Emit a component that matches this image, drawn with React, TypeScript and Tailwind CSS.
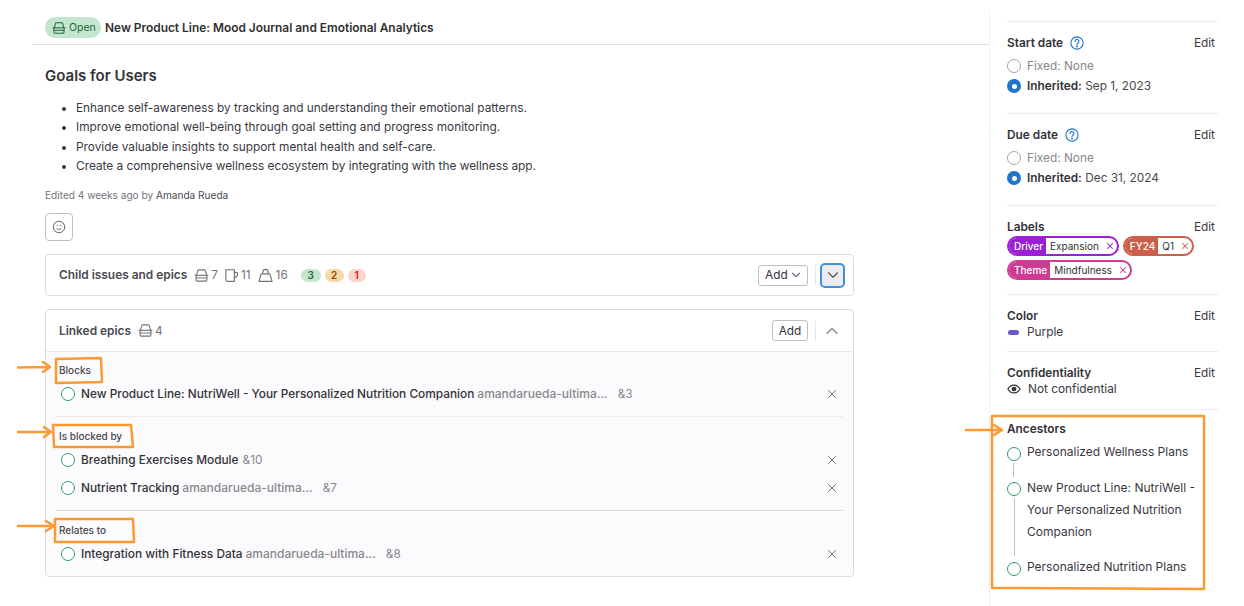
import { ChevronDown, ChevronUp, X } from 'lucide-react';

function EpicIcon({ className = '' }: { className?: string }) {
  return (
    <svg viewBox="0 0 16 16" fill="none" stroke="currentColor" strokeWidth="1.2" className={className}>
      <path d="M2.600 7.600 4 2.800c.1-.5.5-.8 1-.8h6c.5 0 .9.3 1 .8l1.400 4.800" />
      <path d="M.7 7.800h14.600" />
      <path d="M1.800 10.600h12.400M2.200 7.800v4.900c0 .8.6 1.300 1.300 1.300h9c.7 0 1.300-.5 1.300-1.300V7.800" />
    </svg>
  );
}

function IssueIcon({ className = '' }: { className?: string }) {
  return (
    <svg viewBox="0 0 16 16" fill="none" stroke="currentColor" strokeWidth="1.2" className={className}>
      <path d="M2 1.800h9v12.400H3.300c-.8 0-1.300-.5-1.300-1.300V1.800Z" />
      <path d="M11 4.600h1.800c.9 0 1.700.7 1.700 1.600v.9c0 .5-.2 1-.7 1.400L11 11" />
    </svg>
  );
}

function WeightIcon({ className = '' }: { className?: string }) {
  return (
    <svg viewBox="0 0 16 16" fill="none" stroke="currentColor" strokeWidth="1.2" className={className}>
      <path d="M3.400 6.200h9.200l2.400 8H1l2.400-8Z" strokeLinejoin="round" />
      <path d="M5.200 6.200V4.200a2.800 2.800 0 0 1 5.600 0v2" />
    </svg>
  );
}

function StatusCircle({ className = '' }: { className?: string }) {
  return <span className={`block w-[14px] h-[14px] shrink-0 rounded-full border-[1.75px] border-[#2f9a63] bg-white ${className}`} />;
}

function HelpIcon() {
  return (
    <svg viewBox="0 0 16 16" fill="none" stroke="#1f75cb" strokeWidth="1.3" className="w-[14px] h-[14px]">
      <circle cx="8" cy="8" r="7" />
      <path d="M5.800 6.200a2.200 2.200 0 1 1 3.500 1.800c-.8.500-1.300 1-1.300 1.800" strokeLinecap="round" />
      <circle cx="8" cy="12" r=".5" fill="#1f75cb" />
    </svg>
  );
}

function EyeIcon() {
  return (
    <svg viewBox="0 0 16 16" fill="none" stroke="#333238" strokeWidth="1.4" className="w-[14px] h-[14px]">
      <path d="M1 8c1.600-3 4-4.500 7-4.500S13.400 5 15 8c-1.600 3-4 4.500-7 4.500S2.600 11 1 8Z" />
      <circle cx="8" cy="8" r="2" fill="#333238" />
    </svg>
  );
}

function Radio({ checked }: { checked?: boolean }) {
  return checked ? (
    <span className="w-[14px] h-[14px] rounded-full bg-[#1f75cb] flex items-center justify-center shrink-0">
      <span className="w-[5px] h-[5px] rounded-full bg-white" />
    </span>
  ) : (
    <span className="w-[14px] h-[14px] rounded-full border border-[#a4a3a8] bg-white shrink-0" />
  );
}

function DateBlock({ title, date }: { title: string; date: string }) {
  return (
    <div className="h-[92px] border-b border-[#ececef] pt-[11px]">
      <div className="flex items-center justify-between h-[20px] pr-[3px]">
        <div className="flex items-center gap-[7px]">
          <span className="font-semibold text-[#333238]">{title}</span>
          <HelpIcon />
        </div>
        <span className="text-[#3a383f]">Edit</span>
      </div>
      <div className="flex items-center gap-[6px] h-[20px] mt-[3px] text-[#89888d]">
        <Radio />
        <span>Fixed: None</span>
      </div>
      <div className="flex items-center gap-[6px] h-[20px] text-[#4a4950]">
        <Radio checked />
        <span>
          <span className="font-semibold text-[#333238]">Inherited:</span> {date}
        </span>
      </div>
    </div>
  );
}

interface ScopedLabelProps {
  scope: string;
  value: string;
  border: string;
  fill: string;
  iconColor: string;
}

function ScopedLabel({ scope, value, border, fill, iconColor }: ScopedLabelProps) {
  return (
    <span className={`inline-flex items-center h-[20px] rounded-full border-2 text-[10px] leading-none overflow-hidden ${border}`}>
      <span className={`h-full flex items-center pl-[5px] pr-[3px] text-white font-medium ${fill}`}>{scope}</span>
      <span className="flex items-center pl-[4px] pr-[2px] text-[#333238] gap-[6px]">
        {value}
        <X size={10} strokeWidth={2.500} className={iconColor} />
      </span>
    </span>
  );
}

function LinkedRow({ title, path, iid, className = '' }: { title: string; path?: string; iid: string; className?: string }) {
  return (
    <div className={`flex items-center h-[28px] pl-[15px] pr-[14px] whitespace-nowrap ${className}`}>
      <StatusCircle />
      <span className="ml-[6px] text-[11.850px] font-medium text-[#333238]">{title}</span>
      {path && <span className="ml-[3px] text-[12px] font-medium text-[#89888d]">{path}</span>}
      <span className={`${path ? 'ml-[10px]' : 'ml-[4px]'} text-[#89888d]`}>{iid}</span>
      <X size={14} strokeWidth={1.500} className="ml-auto text-[#626168]" />
    </div>
  );
}

export default function App() {
  return (
    <div className="relative flex w-[1244px] h-[606px] overflow-hidden bg-white text-[11.830px] leading-[18px] text-[#333238] font-['Inter',sans-serif]">
      <main className="w-[989px] shrink-0 pt-[17px]">
        <div className="ml-[32px] h-[28px] pl-[13px] border-b border-[#e1e1e3]">
          <div className="flex items-center h-[21px]">
            <span className="flex items-center gap-[3px] h-[21px] w-[56px] pl-[7px] rounded-full bg-[#c3e6cd] text-[#24663b] text-[10.500px]">
              <EpicIcon className="w-[14px] h-[14px]" />
              Open
            </span>
            <span className="ml-[4px] mt-[1px] text-[11.900px] font-semibold text-[#303030]">New Product Line: Mood Journal and Emotional Analytics</span>
          </div>
        </div>

        <div className="pl-[45px] w-[854px]">
          <h2 className="mt-[21px] text-[15px] leading-[20px] font-semibold text-[#333238]">Goals for Users</h2>
          <ul className="mt-[13px] ml-[31px] list-disc leading-[19.300px] text-[#3a383f]">
            <li>Enhance self-awareness by tracking and understanding their emotional patterns.</li>
            <li>Improve emotional well-being through goal setting and progress monitoring.</li>
            <li>Provide valuable insights to support mental health and self-care.</li>
            <li>Create a comprehensive wellness ecosystem by integrating with the wellness app.</li>
          </ul>
          <p className="mt-[11px] text-[10.100px] leading-[16px] text-[#737278]">
            Edited 4 weeks ago by <span className="text-[#4a4950]">Amanda Rueda</span>
          </p>
          <button className="mt-[10px] flex items-center justify-center w-[28px] h-[28px] rounded-[4px] border border-[#bfbfc3] bg-white">
            <svg viewBox="0 0 16 16" fill="none" stroke="#626168" strokeWidth="1.100" className="w-[14px] h-[14px]">
              <circle cx="8" cy="8" r="6.500" />
              <path d="M5.500 9.500c.6 1 1.500 1.500 2.500 1.500s1.900-.5 2.500-1.500" strokeLinecap="round" />
              <path d="M6 6v.6M10 6v.6" strokeLinecap="round" />
            </svg>
          </button>

          <section className="mt-[13px] flex items-center h-[42px] pl-[13px] pr-[8px] rounded-[4px] border border-[#dcdcde]">
            <span className="text-[11.900px] font-semibold text-[#4a4950]">Child issues and epics</span>
            <span className="ml-[7px] flex items-center text-[#737278]">
              <EpicIcon className="w-[15px] h-[15px]" />
              <span className="ml-[2px]">7</span>
              <IssueIcon className="ml-[6px] w-[15px] h-[15px]" />
              <span className="ml-[2px]">11</span>
              <WeightIcon className="ml-[7px] w-[15px] h-[15px]" />
              <span className="ml-[3px]">16</span>
            </span>
            <span className="ml-[13px] flex items-center gap-[4px] text-[10px] font-semibold">
              <span className="flex justify-center w-[20px] h-[13px] leading-[13px] rounded-full bg-[#c3e6cd] text-[#24663b]">3</span>
              <span className="flex justify-center w-[19px] h-[13px] leading-[13px] rounded-full bg-[#f5d9a8] text-[#8f4700]">2</span>
              <span className="flex justify-center w-[18px] h-[13px] leading-[13px] rounded-full bg-[#fdd4cd] text-[#c91c00]">1</span>
            </span>
            <div className="ml-auto flex items-center">
              <button className="flex items-center justify-between w-[50px] h-[21px] pl-[6px] pr-[4px] rounded-[3px] border border-[#bfbfc3] text-[#333238]">
                Add <ChevronDown size={14} className="text-[#737278]" />
              </button>
              <span className="ml-[7px] w-px h-[20px] bg-[#e7e7e9]" />
              <button className="ml-[4px] flex items-center justify-center w-[25px] h-[25px] rounded-[5px] border-2 border-[#428fdc] bg-[#ececef]">
                <ChevronDown size={18} strokeWidth={1.500} className="text-[#535158]" />
              </button>
            </div>
          </section>

          <section className="mt-[13px] rounded-[4px] border border-[#dcdcde]">
            <div className="flex items-center h-[42px] pl-[13px] pr-[11px] border-b border-[#e7e7e9]">
              <span className="text-[11.900px] font-semibold text-[#4a4950]">Linked epics</span>
              <span className="ml-[7px] flex items-center gap-[2px] text-[#737278]">
                <EpicIcon className="w-[15px] h-[15px]" />4
              </span>
              <div className="ml-auto flex items-center">
                <button className="flex items-center justify-center w-[36px] h-[21px] rounded-[3px] border border-[#bfbfc3] text-[#333238]">Add</button>
                <span className="ml-[7px] w-px h-[20px] bg-[#e7e7e9]" />
                <ChevronUp size={20} strokeWidth={1.500} className="ml-[6px] text-[#89888d]" />
              </div>
            </div>
            <div className="h-[224px] bg-[#fbfafd] rounded-b-[4px]">
              <div className="mx-[10px] h-[65px] border-b border-[#ececef] pt-[10px]">
                <div className="pl-[3px] h-[16px] text-[10px] leading-[16px] font-medium text-[#4a4950]">Blocks</div>
                <LinkedRow className="-mx-[10px] mt-[2px]" title="New Product Line: NutriWell - Your Personalized Nutrition Companion" path="amandarueda-ultima..." iid="&3" />
              </div>
              <div className="mx-[10px] h-[94px] border-b border-[#dcdcde] pt-[11px]">
                <div className="pl-[3px] h-[16px] text-[10px] leading-[16px] font-medium text-[#4a4950]">Is blocked by</div>
                <LinkedRow className="-mx-[10px] mt-[2px]" title="Breathing Exercises Module" iid="&10" />
                <LinkedRow className="-mx-[10px]" title="Nutrient Tracking" path="amandarueda-ultima..." iid="&7" />
              </div>
              <div className="mx-[10px] pt-[11px]">
                <div className="pl-[3px] h-[16px] text-[10px] leading-[16px] font-medium text-[#4a4950]">Relates to</div>
                <LinkedRow className="-mx-[10px] mt-[2px]" title="Integration with Fitness Data" path="amandarueda-ultima..." iid="&8" />
              </div>
            </div>
          </section>
        </div>
      </main>

      <aside className="mt-[12px] w-[255px] border-l border-[#f0f0f2] pl-[17px] pr-[26px] text-[#3a383f]">
        <div className="mt-[9px] border-t border-[#ececef]">
          <DateBlock title="Start date" date="Sep 1, 2023" />
          <DateBlock title="Due date" date="Dec 31, 2024" />

          <div className="h-[89px] border-b border-[#ececef] pt-[11px]">
            <div className="flex items-center justify-between h-[19px] pr-[3px]">
              <span className="font-semibold text-[#333238]">Labels</span>
              <span>Edit</span>
            </div>
            <div className="flex flex-wrap gap-x-[4px] gap-y-[4px]">
              <ScopedLabel scope="Driver" value="Expansion" border="border-[#9a1fd6]" fill="bg-[#9a1fd6]" iconColor="text-[#9a1fd6]" />
              <ScopedLabel scope="FY24" value="Q1" border="border-[#cc5f4a]" fill="bg-[#cc5f4a]" iconColor="text-[#cc5f4a]" />
              <ScopedLabel scope="Theme" value="Mindfulness" border="border-[#cf3a92]" fill="bg-[#cf3a92]" iconColor="text-[#cf3a92]" />
            </div>
          </div>

          <div className="h-[57px] border-b border-[#ececef] pt-[11px]">
            <div className="flex items-center justify-between h-[20px] pr-[3px]">
              <span className="font-semibold text-[#333238]">Color</span>
              <span>Edit</span>
            </div>
            <div className="flex items-center gap-[8px] h-[12px]">
              <span className="ml-[1px] w-[11px] h-[5px] rounded-full bg-[#6d57c7]" />
              <span>Purple</span>
            </div>
          </div>

          <div className="h-[58px] border-b border-[#ececef] pt-[11px]">
            <div className="flex items-center justify-between h-[20px] pr-[3px]">
              <span className="font-semibold text-[#333238]">Confidentiality</span>
              <span>Edit</span>
            </div>
            <div className="flex items-center gap-[7px] h-[12px]">
              <EyeIcon />
              <span>Not confidential</span>
            </div>
          </div>

          <div className="pt-[10px] text-[12px]">
            <div className="text-[11.830px] font-semibold text-[#333238] h-[18px]">Ancestors</div>
            <div className="mt-[4px] flex">
              <StatusCircle className="mt-[5px]" />
              <span className="ml-[6px] leading-[20px]">Personalized Wellness Plans</span>
            </div>
            <div className="ml-[6px] mt-[1px] w-px h-[14px] bg-[#bfbfc3]" />
            <div className="flex">
              <div className="shrink-0 w-[14px] flex flex-col items-center">
                <StatusCircle className="mt-[5px]" />
                <span className="w-px h-[58px] mt-[2px] bg-[#bfbfc3]" />
              </div>
              <span className="ml-[6px] w-[172px] leading-[22px]">New Product Line: NutriWell - Your Personalized Nutrition Companion</span>
            </div>
            <div className="mt-[1px] flex">
              <StatusCircle className="mt-[5px]" />
              <span className="ml-[6px] leading-[20px]">Personalized Nutrition Plans</span>
            </div>
          </div>
        </div>
      </aside>

      {/* hand drawn annotations on top of the screenshot */}
      <svg className="absolute inset-0 pointer-events-none" width="1244" height="606" fill="none" stroke="#fb9a32" strokeWidth="2.500" strokeLinecap="round" strokeLinejoin="round">
        <path d="M18 367.500 48 367M43 362l7 5-7 5" />
        <path d="M56 359 101 358 102 382 56 383Z" />
        <path d="M18 432 49 432M44 427l7 5-7 5" />
        <path d="M53 425 131 425 133 447 54 447Z" />
        <path d="M18 526 51 526M46 521l8 5-8 5" />
        <path d="M55 519 133 519 134 542 55 542Z" />
        <path d="M966 430 1000 430M994 425l8 5-8 5" />
        <path d="M992 416 1204 416 1204 589 992 588Z" />
      </svg>
    </div>
  );
}
